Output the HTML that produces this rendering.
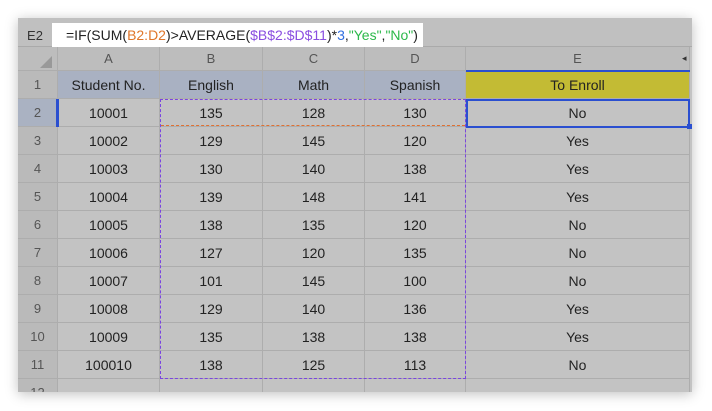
<!DOCTYPE html>
<html><head><style>
*{margin:0;padding:0;box-sizing:border-box}
body{width:712px;height:411px;background:#fff;font-family:"Liberation Sans",Arial,sans-serif;position:relative;overflow:hidden}
.panel{position:absolute;left:18px;top:18px;width:674px;height:374px;background:#c3c3c3;box-shadow:0 2px 12px rgba(0,0,0,.25);overflow:hidden}
.c{position:absolute;display:flex;align-items:center;justify-content:center;font-size:14px;color:#222;border-right:1px solid #adadad;border-bottom:1px solid #adadad}
.rh{color:#555;font-size:13px;background:#bababa}
.ch{color:#555;font-size:13px;background:#bdbdbd}
.fx{position:absolute;left:34px;top:5px;width:371px;height:24px;background:#fff;font-size:14px;display:flex;align-items:center;padding-left:14px;color:#222}
</style></head><body>
<div class="panel">
<div style="position:absolute;left:0;top:0;width:674px;height:29px;background:#c0c0c0;border-bottom:1px solid #aaa"></div>
<div style="position:absolute;left:0;top:5px;width:34px;height:24px;display:flex;align-items:center;justify-content:center;font-size:13px;color:#333">E2</div>
<div class="fx">=IF(SUM(<span style="color:#e0762a">B2:D2</span>)&gt;AVERAGE(<span style="color:#8a4ee0">$B$2:$D$11</span>)*<span style="color:#2f6fe0">3</span>,<span style="color:#2bb84a">"Yes"</span>,<span style="color:#2bb84a">"No"</span>)</div>
<div id="g"></div>
</div>
<script>
var g=document.getElementById('g'),h='';
var xs=[0,40,142,245,347,448,672];
var cols=['','A','B','C','D','E'];
var top0=29;
for(var i=0;i<6;i++){h+='<div class="c ch" style="left:'+xs[i]+'px;top:'+top0+'px;width:'+(xs[i+1]-xs[i])+'px;height:24px">'+cols[i]+'</div>';}
h+='<div style="position:absolute;left:22px;top:38px;width:0;height:0;border-left:12px solid transparent;border-bottom:12px solid #999"></div>';
var data=[['Student No.','English','Math','Spanish','To Enroll'],['10001','135','128','130','No'],['10002','129','145','120','Yes'],['10003','130','140','138','Yes'],['10004','139','148','141','Yes'],['10005','138','135','120','No'],['10006','127','120','135','No'],['10007','101','145','100','No'],['10008','129','140','136','Yes'],['10009','135','138','138','Yes'],['100010','138','125','113','No'],['','','','','']];
for(var r=0;r<12;r++){var y=53+r*28;
 var bg=r==1?'#aab2c2':'#bababa';
 h+='<div class="c rh" style="left:0;top:'+y+'px;width:40px;height:28px;background:'+bg+'">'+(r+1)+'</div>';
 for(var c=0;c<5;c++){var b='';if(r==0)b='background:'+(c==4?'#c3bb34':'#a9b1c2')+';';
  h+='<div class="c" style="left:'+xs[c+1]+'px;top:'+y+'px;width:'+(xs[c+2]-xs[c+1])+'px;height:28px;'+b+'">'+data[r][c]+'</div>';}
}
h+='<div style="position:absolute;left:38px;top:81px;width:3px;height:28px;background:#2a4fd0"></div>';
h+='<div style="position:absolute;left:448px;top:52px;width:224px;height:2px;background:#2a4fd0"></div>';
h+='<div style="position:absolute;left:448px;top:81px;width:224px;height:29px;border:2px solid #2a4fd0"></div>';
h+='<div style="position:absolute;left:669px;top:106px;width:5px;height:5px;background:#2a4fd0"></div>';
h+='<div style="position:absolute;left:142px;top:81px;width:306px;height:280px;border:1.5px dashed #7a45e0"></div>';
h+='<div style="position:absolute;left:143px;top:107px;width:304px;height:0;border-top:1.5px dashed #e07030"></div>';
h+='<div style="position:absolute;left:664px;top:35px;font-size:9px;color:#333">◂</div>';
g.innerHTML=h;
</script>
</body></html>
